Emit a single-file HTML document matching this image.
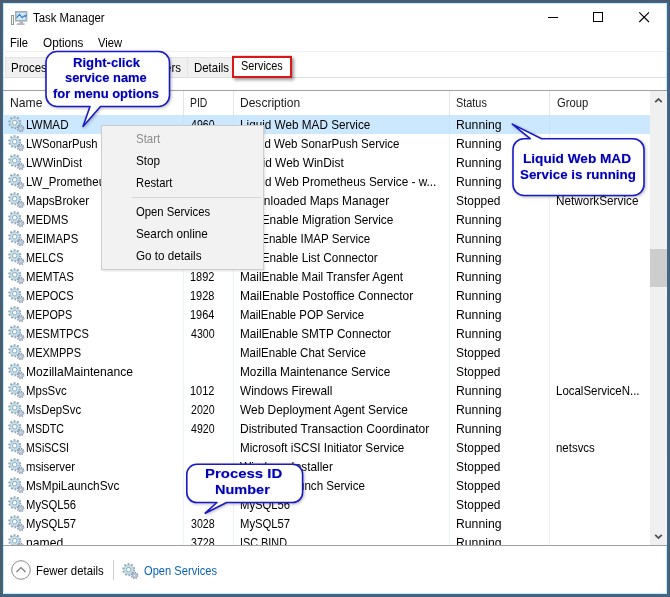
<!DOCTYPE html>
<html><head><meta charset="utf-8"><title>Task Manager</title>
<style>
html,body{margin:0;padding:0}
body{width:670px;height:597px;overflow:hidden;background:#4d5b6b;position:relative;font-family:"Liberation Sans",sans-serif;font-size:12px;color:#000}
.abs{position:absolute}
.t{position:absolute;white-space:nowrap;line-height:16px;height:16px;transform-origin:0 0}
#frame{left:0;top:0;width:670px;height:597px;background:linear-gradient(#4b5a70,#4b5a70 40px,#4e5d6a)}
#frame2{left:1.500px;top:2px;width:667px;height:593.500px;background:#3f688c}
#win{left:3px;top:3px;width:664px;height:591px;background:#fff;box-shadow:0 0 0 1px #c4ecf7 inset}
.tab{position:absolute;top:57px;height:20px;border:1px solid #e4e4e4;border-bottom:none;background:#f0f0f0;box-sizing:border-box}
#clip{left:0;top:0;width:650px;height:545px;overflow:hidden}
.sep{position:absolute;top:91px;width:1px;height:454px;background:rgba(190,208,232,.3)}
.seph{position:absolute;top:91px;width:1px;height:24px;background:#e5e5e5}
#ctx{left:101px;top:125px;width:161px;height:143px;background:#f2f2f2;border:1px solid #cdcdcd;box-shadow:1px 1px 2px rgba(0,0,0,.12)}
.callout{position:absolute;font-weight:bold;color:#0000b4;text-align:center;font-size:13px;line-height:15.300px;white-space:nowrap;text-shadow:0 0 1px rgba(40,40,255,.45)}
#redbox{left:232px;top:55.500px;width:56px;height:18px;border:2px solid #d81818;box-shadow:2px 2px 3px rgba(0,0,0,.4)}
</style></head><body>
<svg width="0" height="0" style="position:absolute"><defs>
<g id="gear">
<circle cx="7.700" cy="7.700" r="5.500" fill="none" stroke="#8fa3b3" stroke-width="2" stroke-dasharray="1.730 1.730" />
<circle cx="7.700" cy="7.700" r="4.700" fill="#c4e6f2" stroke="#9fb9c8" stroke-width=".8"/>
<circle cx="7.700" cy="7.700" r="2.300" fill="#fdfeff" stroke="#8b9dad" stroke-width=".9"/>
<circle cx="13.600" cy="13.400" r="3" fill="none" stroke="#8290a8" stroke-width="1.600" stroke-dasharray="1.180 1.180"/>
<circle cx="13.600" cy="13.400" r="2.400" fill="#cbd9e8" stroke="#8f9db3" stroke-width=".7"/>
<circle cx="13.600" cy="13.400" r=".9" fill="#fff" stroke="#8290a8" stroke-width=".5"/>
</g></defs></svg>
<div id="frame" class="abs"></div><div id="frame2" class="abs"></div>
<div id="win" class="abs"></div>
<!-- title bar -->
<svg class="abs" style="left:11px;top:11px" width="20" height="16" viewBox="0 0 20 16">
 <rect x="0.500" y="4.500" width="2" height="9" fill="#f4f4f0" stroke="#8f9a94" stroke-width="1"/>
 <rect x="4.800" y="0.800" width="10.700" height="9" fill="#cfe9fb" stroke="#a3adb5" stroke-width="1.600"/>
 <polyline points="5.700,6.600 8.500,3.300 11.200,6.600 13.300,4.700 14.300,5.700 15.600,3.400" fill="none" stroke="#2b78c8" stroke-width="1.100"/>
 <rect x="8.500" y="10.500" width="3.500" height="2" fill="#aab3b8"/>
 <rect x="5.800" y="12.400" width="7.700" height="1.400" fill="#9ea8ae"/>
</svg>
<svg class="abs" style="left:543px;top:9px" width="120" height="24" viewBox="0 0 120 24">
 <path d="M5 8.500h10" stroke="#000" stroke-width="1" fill="none"/>
 <rect x="50.500" y="3.500" width="9" height="9" stroke="#000" stroke-width="1" fill="none"/>
 <path d="M96.300 3.300l9.700 9.700M106 3.300l-9.700 9.700" stroke="#000" stroke-width="1.100" fill="none"/>
</svg>
<div class="abs" style="left:3px;top:51px;width:664px;height:1px;background:#f1f1f1"></div>
<!-- tabs -->
<div class="tab" style="left:5px;width:64px"></div>
<div class="tab" style="left:68px;width:73px"></div>
<div class="tab" style="left:140px;width:48px"></div>
<div class="tab" style="left:187px;width:46px"></div>
<div class="abs" style="left:3px;top:77px;width:664px;height:1px;background:#dedede"></div>
<div class="tab" style="left:232px;width:60px;top:55px;height:23px;background:#fff"></div>
<!-- table -->
<div class="abs" style="left:3px;top:90px;width:664px;height:1px;background:#a0a0a0"></div>
<div class="abs" style="left:3px;top:545px;width:664px;height:1px;background:#a0a0a0"></div>
<div class="abs" style="left:3px;top:115px;width:647px;height:19px;background:#cce8ff"></div>
<div class="sep" style="left:183px"></div><div class="sep" style="left:233px"></div><div class="sep" style="left:449px"></div><div class="sep" style="left:549px"></div>
<div class="seph" style="left:183px"></div><div class="seph" style="left:233px"></div><div class="seph" style="left:449px"></div><div class="seph" style="left:549px"></div>
<div id="clip" class="abs">
<svg class="abs" style="left:7px;top:115px" width="18" height="18" viewBox="0 0 18 18"><use href="#gear"/></svg>
<svg class="abs" style="left:7px;top:134px" width="18" height="18" viewBox="0 0 18 18"><use href="#gear"/></svg>
<svg class="abs" style="left:7px;top:153px" width="18" height="18" viewBox="0 0 18 18"><use href="#gear"/></svg>
<svg class="abs" style="left:7px;top:172px" width="18" height="18" viewBox="0 0 18 18"><use href="#gear"/></svg>
<svg class="abs" style="left:7px;top:191px" width="18" height="18" viewBox="0 0 18 18"><use href="#gear"/></svg>
<svg class="abs" style="left:7px;top:210px" width="18" height="18" viewBox="0 0 18 18"><use href="#gear"/></svg>
<svg class="abs" style="left:7px;top:229px" width="18" height="18" viewBox="0 0 18 18"><use href="#gear"/></svg>
<svg class="abs" style="left:7px;top:248px" width="18" height="18" viewBox="0 0 18 18"><use href="#gear"/></svg>
<svg class="abs" style="left:7px;top:267px" width="18" height="18" viewBox="0 0 18 18"><use href="#gear"/></svg>
<svg class="abs" style="left:7px;top:286px" width="18" height="18" viewBox="0 0 18 18"><use href="#gear"/></svg>
<svg class="abs" style="left:7px;top:305px" width="18" height="18" viewBox="0 0 18 18"><use href="#gear"/></svg>
<svg class="abs" style="left:7px;top:324px" width="18" height="18" viewBox="0 0 18 18"><use href="#gear"/></svg>
<svg class="abs" style="left:7px;top:343px" width="18" height="18" viewBox="0 0 18 18"><use href="#gear"/></svg>
<svg class="abs" style="left:7px;top:362px" width="18" height="18" viewBox="0 0 18 18"><use href="#gear"/></svg>
<svg class="abs" style="left:7px;top:381px" width="18" height="18" viewBox="0 0 18 18"><use href="#gear"/></svg>
<svg class="abs" style="left:7px;top:400px" width="18" height="18" viewBox="0 0 18 18"><use href="#gear"/></svg>
<svg class="abs" style="left:7px;top:419px" width="18" height="18" viewBox="0 0 18 18"><use href="#gear"/></svg>
<svg class="abs" style="left:7px;top:438px" width="18" height="18" viewBox="0 0 18 18"><use href="#gear"/></svg>
<svg class="abs" style="left:7px;top:457px" width="18" height="18" viewBox="0 0 18 18"><use href="#gear"/></svg>
<svg class="abs" style="left:7px;top:476px" width="18" height="18" viewBox="0 0 18 18"><use href="#gear"/></svg>
<svg class="abs" style="left:7px;top:495px" width="18" height="18" viewBox="0 0 18 18"><use href="#gear"/></svg>
<svg class="abs" style="left:7px;top:514px" width="18" height="18" viewBox="0 0 18 18"><use href="#gear"/></svg>
<svg class="abs" style="left:7px;top:533px" width="18" height="18" viewBox="0 0 18 18"><use href="#gear"/></svg>
<div class="t" style="left:10.00px;top:95.44px;font-size:11.9px;transform:scaleX(1.0229);color:#1a1a1a">Name</div>
<div class="t" style="left:189.62px;top:95.44px;font-size:11.9px;transform:scaleX(0.8788);color:#1a1a1a">PID</div>
<div class="t" style="left:239.71px;top:95.44px;font-size:11.9px;transform:scaleX(1.0113);color:#1a1a1a">Description</div>
<div class="t" style="left:456.17px;top:95.44px;font-size:11.9px;transform:scaleX(0.9157);color:#1a1a1a">Status</div>
<div class="t" style="left:557.20px;top:95.44px;font-size:11.9px;transform:scaleX(0.9448);color:#1a1a1a">Group</div>
<div class="t" style="left:25.83px;top:117.44px;font-size:11.9px;transform:scaleX(0.9814);">LWMAD</div>
<div class="t" style="left:190.63px;top:117.44px;font-size:11.9px;transform:scaleX(0.8910);">4960</div>
<div class="t" style="left:239.83px;top:117.44px;font-size:11.9px;transform:scaleX(0.9877);">Liquid Web MAD Service</div>
<div class="t" style="left:455.59px;top:117.44px;font-size:11.9px;transform:scaleX(1.0270);">Running</div>
<div class="t" style="left:25.87px;top:136.44px;font-size:11.9px;transform:scaleX(0.9440);">LWSonarPush</div>
<div class="t" style="left:190.63px;top:136.44px;font-size:11.9px;transform:scaleX(0.8924);">4968</div>
<div class="t" style="left:239.84px;top:136.44px;font-size:11.9px;transform:scaleX(0.9706);">Liquid Web SonarPush Service</div>
<div class="t" style="left:455.59px;top:136.44px;font-size:11.9px;transform:scaleX(1.0270);">Running</div>
<div class="t" style="left:25.84px;top:155.44px;font-size:11.9px;transform:scaleX(0.9695);">LWWinDist</div>
<div class="t" style="left:190.63px;top:155.44px;font-size:11.9px;transform:scaleX(0.8927);">4976</div>
<div class="t" style="left:239.82px;top:155.44px;font-size:11.9px;transform:scaleX(1.0017);">Liquid Web WinDist</div>
<div class="t" style="left:455.59px;top:155.44px;font-size:11.9px;transform:scaleX(1.0270);">Running</div>
<div class="t" style="left:25.85px;top:174.44px;font-size:11.9px;transform:scaleX(0.9674);">LW_Prometheus</div>
<div class="t" style="left:190.63px;top:174.44px;font-size:11.9px;transform:scaleX(0.8889);">4984</div>
<div class="t" style="left:239.83px;top:174.44px;font-size:11.9px;transform:scaleX(0.9915);">Liquid Web Prometheus Service - w...</div>
<div class="t" style="left:455.59px;top:174.44px;font-size:11.9px;transform:scaleX(1.0270);">Running</div>
<div class="t" style="left:25.83px;top:193.44px;font-size:11.9px;transform:scaleX(0.9843);">MapsBroker</div>
<div class="t" style="left:239.81px;top:193.44px;font-size:11.9px;transform:scaleX(1.0032);">Downloaded Maps Manager</div>
<div class="t" style="left:455.70px;top:193.44px;font-size:11.9px;transform:scaleX(1.0019);">Stopped</div>
<div class="t" style="left:555.73px;top:193.44px;font-size:11.9px;transform:scaleX(0.9904);">NetworkService</div>
<div class="t" style="left:25.86px;top:212.44px;font-size:11.9px;transform:scaleX(0.9572);">MEDMS</div>
<div class="t" style="left:189.84px;top:212.44px;font-size:11.9px;transform:scaleX(0.9193);">1844</div>
<div class="t" style="left:239.82px;top:212.44px;font-size:11.9px;transform:scaleX(0.9960);">MailEnable Migration Service</div>
<div class="t" style="left:455.59px;top:212.44px;font-size:11.9px;transform:scaleX(1.0270);">Running</div>
<div class="t" style="left:25.86px;top:231.44px;font-size:11.9px;transform:scaleX(0.9516);">MEIMAPS</div>
<div class="t" style="left:189.83px;top:231.44px;font-size:11.9px;transform:scaleX(0.9216);">1860</div>
<div class="t" style="left:239.84px;top:231.44px;font-size:11.9px;transform:scaleX(0.9728);">MailEnable IMAP Service</div>
<div class="t" style="left:455.59px;top:231.44px;font-size:11.9px;transform:scaleX(1.0270);">Running</div>
<div class="t" style="left:25.90px;top:250.44px;font-size:11.9px;transform:scaleX(0.9123);">MELCS</div>
<div class="t" style="left:189.83px;top:250.44px;font-size:11.9px;transform:scaleX(0.9233);">1876</div>
<div class="t" style="left:239.82px;top:250.44px;font-size:11.9px;transform:scaleX(0.9926);">MailEnable List Connector</div>
<div class="t" style="left:455.59px;top:250.44px;font-size:11.9px;transform:scaleX(1.0270);">Running</div>
<div class="t" style="left:25.86px;top:269.44px;font-size:11.9px;transform:scaleX(0.9569);">MEMTAS</div>
<div class="t" style="left:189.83px;top:269.44px;font-size:11.9px;transform:scaleX(0.9233);">1892</div>
<div class="t" style="left:239.83px;top:269.44px;font-size:11.9px;transform:scaleX(0.9913);">MailEnable Mail Transfer Agent</div>
<div class="t" style="left:455.59px;top:269.44px;font-size:11.9px;transform:scaleX(1.0270);">Running</div>
<div class="t" style="left:25.88px;top:288.44px;font-size:11.9px;transform:scaleX(0.9239);">MEPOCS</div>
<div class="t" style="left:189.83px;top:288.44px;font-size:11.9px;transform:scaleX(0.9230);">1928</div>
<div class="t" style="left:239.81px;top:288.44px;font-size:11.9px;transform:scaleX(1.0053);">MailEnable Postoffice Connector</div>
<div class="t" style="left:455.59px;top:288.44px;font-size:11.9px;transform:scaleX(1.0270);">Running</div>
<div class="t" style="left:25.90px;top:307.44px;font-size:11.9px;transform:scaleX(0.9079);">MEPOPS</div>
<div class="t" style="left:189.84px;top:307.44px;font-size:11.9px;transform:scaleX(0.9193);">1964</div>
<div class="t" style="left:239.86px;top:307.44px;font-size:11.9px;transform:scaleX(0.9549);">MailEnable POP Service</div>
<div class="t" style="left:455.59px;top:307.44px;font-size:11.9px;transform:scaleX(1.0270);">Running</div>
<div class="t" style="left:25.88px;top:326.44px;font-size:11.9px;transform:scaleX(0.9317);">MESMTPCS</div>
<div class="t" style="left:190.63px;top:326.44px;font-size:11.9px;transform:scaleX(0.8910);">4300</div>
<div class="t" style="left:239.83px;top:326.44px;font-size:11.9px;transform:scaleX(0.9862);">MailEnable SMTP Connector</div>
<div class="t" style="left:455.59px;top:326.44px;font-size:11.9px;transform:scaleX(1.0270);">Running</div>
<div class="t" style="left:25.88px;top:345.44px;font-size:11.9px;transform:scaleX(0.9258);">MEXMPPS</div>
<div class="t" style="left:239.85px;top:345.44px;font-size:11.9px;transform:scaleX(0.9672);">MailEnable Chat Service</div>
<div class="t" style="left:455.70px;top:345.44px;font-size:11.9px;transform:scaleX(1.0019);">Stopped</div>
<div class="t" style="left:25.80px;top:364.44px;font-size:11.9px;transform:scaleX(1.0188);">MozillaMaintenance</div>
<div class="t" style="left:239.82px;top:364.44px;font-size:11.9px;transform:scaleX(0.9934);">Mozilla Maintenance Service</div>
<div class="t" style="left:455.70px;top:364.44px;font-size:11.9px;transform:scaleX(1.0019);">Stopped</div>
<div class="t" style="left:25.85px;top:383.44px;font-size:11.9px;transform:scaleX(0.9618);">MpsSvc</div>
<div class="t" style="left:189.83px;top:383.44px;font-size:11.9px;transform:scaleX(0.9233);">1012</div>
<div class="t" style="left:239.96px;top:383.44px;font-size:11.9px;transform:scaleX(0.9979);">Windows Firewall</div>
<div class="t" style="left:455.59px;top:383.44px;font-size:11.9px;transform:scaleX(1.0270);">Running</div>
<div class="t" style="left:555.75px;top:383.44px;font-size:11.9px;transform:scaleX(0.9645);">LocalServiceN...</div>
<div class="t" style="left:25.85px;top:402.44px;font-size:11.9px;transform:scaleX(0.9581);">MsDepSvc</div>
<div class="t" style="left:190.60px;top:402.44px;font-size:11.9px;transform:scaleX(0.8921);">2020</div>
<div class="t" style="left:239.96px;top:402.44px;font-size:11.9px;transform:scaleX(1.0009);">Web Deployment Agent Service</div>
<div class="t" style="left:455.59px;top:402.44px;font-size:11.9px;transform:scaleX(1.0270);">Running</div>
<div class="t" style="left:25.91px;top:421.44px;font-size:11.9px;transform:scaleX(0.8970);">MSDTC</div>
<div class="t" style="left:190.63px;top:421.44px;font-size:11.9px;transform:scaleX(0.8910);">4920</div>
<div class="t" style="left:239.81px;top:421.44px;font-size:11.9px;transform:scaleX(1.0114);">Distributed Transaction Coordinator</div>
<div class="t" style="left:455.59px;top:421.44px;font-size:11.9px;transform:scaleX(1.0270);">Running</div>
<div class="t" style="left:25.91px;top:440.44px;font-size:11.9px;transform:scaleX(0.8914);">MSiSCSI</div>
<div class="t" style="left:239.83px;top:440.44px;font-size:11.9px;transform:scaleX(0.9829);">Microsoft iSCSI Initiator Service</div>
<div class="t" style="left:455.70px;top:440.44px;font-size:11.9px;transform:scaleX(1.0019);">Stopped</div>
<div class="t" style="left:555.84px;top:440.44px;font-size:11.9px;transform:scaleX(0.9627);">netsvcs</div>
<div class="t" style="left:25.95px;top:459.44px;font-size:11.9px;transform:scaleX(0.9530);">msiserver</div>
<div class="t" style="left:239.96px;top:459.44px;font-size:11.9px;transform:scaleX(0.9964);">Windows Installer</div>
<div class="t" style="left:455.70px;top:459.44px;font-size:11.9px;transform:scaleX(1.0019);">Stopped</div>
<div class="t" style="left:25.82px;top:478.44px;font-size:11.9px;transform:scaleX(0.9954);">MsMpiLaunchSvc</div>
<div class="t" style="left:239.84px;top:478.44px;font-size:11.9px;transform:scaleX(0.9745);">MS-MPI Launch Service</div>
<div class="t" style="left:455.70px;top:478.44px;font-size:11.9px;transform:scaleX(1.0019);">Stopped</div>
<div class="t" style="left:25.86px;top:497.44px;font-size:11.9px;transform:scaleX(0.9479);">MySQL56</div>
<div class="t" style="left:239.86px;top:497.44px;font-size:11.9px;transform:scaleX(0.9479);">MySQL56</div>
<div class="t" style="left:455.70px;top:497.44px;font-size:11.9px;transform:scaleX(1.0019);">Stopped</div>
<div class="t" style="left:25.86px;top:516.44px;font-size:11.9px;transform:scaleX(0.9479);">MySQL57</div>
<div class="t" style="left:190.60px;top:516.44px;font-size:11.9px;transform:scaleX(0.8936);">3028</div>
<div class="t" style="left:239.86px;top:516.44px;font-size:11.9px;transform:scaleX(0.9479);">MySQL57</div>
<div class="t" style="left:455.59px;top:516.44px;font-size:11.9px;transform:scaleX(1.0270);">Running</div>
<div class="t" style="left:25.89px;top:535.44px;font-size:11.9px;transform:scaleX(1.0219);">named</div>
<div class="t" style="left:190.60px;top:535.44px;font-size:11.9px;transform:scaleX(0.8936);">3728</div>
<div class="t" style="left:239.85px;top:535.44px;font-size:11.9px;transform:scaleX(0.9119);">ISC BIND</div>
<div class="t" style="left:455.59px;top:535.44px;font-size:11.9px;transform:scaleX(1.0270);">Running</div>
</div>
<div class="abs" style="left:650px;top:91px;width:17px;height:454px;background:#f0f0f0"></div>
<div class="abs" style="left:650px;top:249px;width:17px;height:38px;background:#cdcdcd"></div>
<svg class="abs" style="left:653px;top:96px" width="11" height="8" viewBox="0 0 11 8"><path d="M2.200 6.200l3.300-3.300 3.300 3.300" fill="none" stroke="#505050" stroke-width="1.800"/></svg>
<svg class="abs" style="left:653px;top:533px" width="11" height="8" viewBox="0 0 11 8"><path d="M2.200 1.800l3.300 3.300 3.300-3.300" fill="none" stroke="#505050" stroke-width="1.800"/></svg>
<!-- footer -->
<svg class="abs" style="left:9.500px;top:558.500px" width="22" height="22" viewBox="0 0 22 22"><circle cx="11" cy="11" r="9.300" fill="#fff" stroke="#8a8a8a" stroke-width="1"/><path d="M6.500 13l4.500-4.500 4.500 4.500" fill="none" stroke="#7a7a7a" stroke-width="1.200"/></svg>
<div class="abs" style="left:113px;top:560px;width:1px;height:20px;background:#d0d0d0"></div>
<svg class="abs" style="left:121px;top:562px" width="18" height="18" viewBox="0 0 18 18"><use href="#gear"/></svg>
<div class="t" style="left:33.03px;top:10.24px;font-size:12px;transform:scaleX(0.9505);">Task Manager</div>
<div class="t" style="left:9.67px;top:35.04px;font-size:11.9px;transform:scaleX(0.9373);">File</div>
<div class="t" style="left:42.50px;top:35.04px;font-size:11.9px;transform:scaleX(0.9875);">Options</div>
<div class="t" style="left:98.04px;top:35.04px;font-size:11.9px;transform:scaleX(0.9406);">View</div>
<div class="t" style="left:10.95px;top:60.24px;font-size:11.9px;transform:scaleX(0.9674);">Processes</div>
<div class="t" style="left:74.15px;top:60.24px;font-size:11.9px;transform:scaleX(0.9674);">Performance</div>
<div class="t" style="left:151.30px;top:60.24px;font-size:11.9px;transform:scaleX(0.9674);">Users</div>
<div class="t" style="left:193.75px;top:60.24px;font-size:11.9px;transform:scaleX(0.9615);">Details</div>
<div class="t" style="left:240.77px;top:58.24px;font-size:11.9px;transform:scaleX(0.9159);">Services</div>
<div class="t" style="left:36.45px;top:562.64px;font-size:11.9px;transform:scaleX(0.9584);">Fewer details</div>
<div class="t" style="left:143.80px;top:562.64px;font-size:11.9px;transform:scaleX(0.9358);color:#0a63b8">Open Services</div>
<!-- context menu -->
<div id="ctx" class="abs"></div>
<div class="abs" style="left:132px;top:197px;width:129px;height:1px;background:#d5d5d5"></div>
<div class="t" style="left:135.73px;top:130.94px;font-size:11.9px;transform:scaleX(0.9665);color:#8c8c8c">Start</div>
<div class="t" style="left:135.71px;top:152.94px;font-size:11.9px;transform:scaleX(0.9870);">Stop</div>
<div class="t" style="left:135.66px;top:174.94px;font-size:11.9px;transform:scaleX(0.9467);">Restart</div>
<div class="t" style="left:135.70px;top:203.94px;font-size:11.9px;transform:scaleX(0.9499);">Open Services</div>
<div class="t" style="left:135.71px;top:225.94px;font-size:11.9px;transform:scaleX(0.9876);">Search online</div>
<div class="t" style="left:135.70px;top:247.94px;font-size:11.9px;transform:scaleX(0.9820);">Go to details</div>
<div id="redbox" class="abs"></div>
<!-- callouts -->
<svg class="abs" style="left:0;top:0;filter:drop-shadow(1.500px 1.500px 1.500px rgba(0,0,0,.28))" width="670" height="597" viewBox="0 0 670 597">
 <g fill="#fff" stroke="#1a1ac8" stroke-width="1.600" stroke-linejoin="round">
  <path d="M57 51.500h101.500a11 11 0 0 1 11 11v33a11 11 0 0 1-11 11h-58l-17.500 20 7-20h-33a11 11 0 0 1-11-11v-33a11 11 0 0 1 11-11z"/>
  <path d="M524 138.700h6.200l-17.900-14.600 29.300 14.600h91.400a11 11 0 0 1 11 11v34.800a11 11 0 0 1-11 11h-109a11 11 0 0 1-11-11v-34.800a11 11 0 0 1 11-11z"/>
  <path d="M196.800 464.300h95.800a10 10 0 0 1 10 10v18.200a10 10 0 0 1-10 10h-66l-21.400 10.700 11.700-10.700h-20.100a10 10 0 0 1-10-10v-18.200a10 10 0 0 1 10-10z"/>
 </g>
</svg>
<div class="t" style="left:72.86px;top:54.50px;font-size:13px;transform:scaleX(1.0095);font-weight:bold;color:#0000b2;text-shadow:0 0 1px rgba(60,60,255,.5)">Right-click</div>
<div class="t" style="left:65.40px;top:70.00px;font-size:13px;transform:scaleX(0.9921);font-weight:bold;color:#0000b2;text-shadow:0 0 1px rgba(60,60,255,.5)">service name</div>
<div class="t" style="left:53.14px;top:85.50px;font-size:13px;transform:scaleX(0.9994);font-weight:bold;color:#0000b2;text-shadow:0 0 1px rgba(60,60,255,.5)">for menu options</div>
<div class="t" style="left:522.73px;top:150.80px;font-size:13px;transform:scaleX(1.0490);font-weight:bold;color:#0000b2;text-shadow:0 0 1px rgba(60,60,255,.5)">Liquid Web MAD</div>
<div class="t" style="left:520.14px;top:166.50px;font-size:13px;transform:scaleX(1.0284);font-weight:bold;color:#0000b2;text-shadow:0 0 1px rgba(60,60,255,.5)">Service is running</div>
<div class="t" style="left:204.85px;top:466.30px;font-size:13px;transform:scaleX(1.1497);font-weight:bold;color:#0000b2;text-shadow:0 0 1px rgba(60,60,255,.5)">Process ID</div>
<div class="t" style="left:215.38px;top:481.80px;font-size:13px;transform:scaleX(1.1165);font-weight:bold;color:#0000b2;text-shadow:0 0 1px rgba(60,60,255,.5)">Number</div>
</body></html>
